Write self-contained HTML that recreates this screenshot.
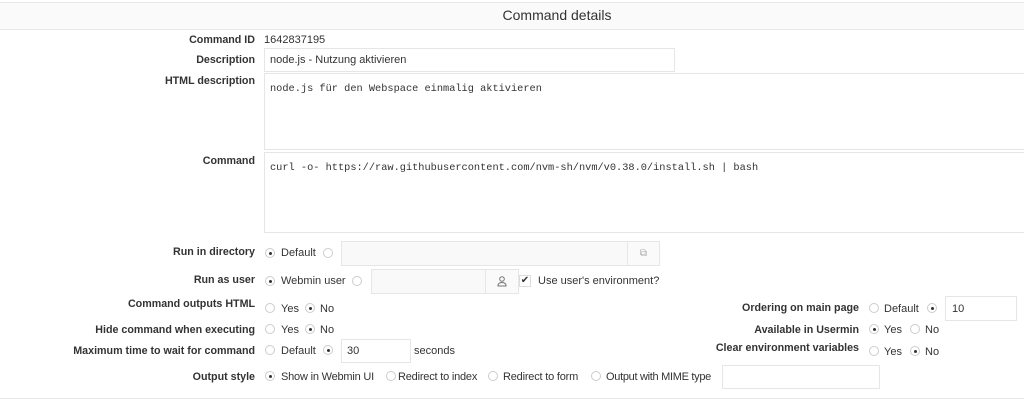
<!DOCTYPE html>
<html><head><meta charset="utf-8">
<style>
*{box-sizing:border-box;margin:0;padding:0}
body{width:1024px;height:402px;background:#fff;font-family:"Liberation Sans",sans-serif;font-size:11px;color:#333;position:relative;overflow:hidden}
.a{position:absolute;white-space:nowrap}
.l{position:absolute;font-weight:bold;text-align:right;color:#333;white-space:nowrap;font-size:10.7px}
.box{position:absolute;border:1px solid #e6e6e6;background:#fff}
.dis{background:#f9f9f9}
.r{position:absolute;width:10px;height:10px;border:1px solid #ccc;border-radius:50%;background:#fff}
.r.on::after{content:"";position:absolute;left:2.5px;top:2.5px;width:3px;height:3px;border-radius:50%;background:#333}
.mono{font-family:"Liberation Mono",monospace;font-size:10.3px}
</style></head><body>
<div class="a" style="left:0;top:2px;width:1024px;height:28px;background:#fafafa;border-top:1px solid #e8e8e8;border-bottom:1px solid #e8e8e8"></div>
<div class="a" style="left:0;top:7px;width:1114px;text-align:center;font-size:14px;color:#333">Command details</div>

<div class="l" style="right:769px;top:34px">Command ID</div>
<div class="a" style="left:264px;top:34px">1642837195</div>

<div class="l" style="right:769px;top:54px">Description</div>
<div class="box" style="left:264px;top:48px;width:411px;height:24px"></div>
<div class="a" style="left:270px;top:54px">node.js - Nutzung aktivieren</div>

<div class="l" style="right:769px;top:75px">HTML description</div>
<div class="box" style="left:264px;top:73px;width:770px;height:77px"></div>
<div class="a mono" style="left:270px;top:83px">node.js für den Webspace einmalig aktivieren</div>

<div class="l" style="right:769px;top:155px">Command</div>
<div class="box" style="left:264px;top:152px;width:770px;height:81px"></div>
<div class="a mono" style="left:270px;top:162px">curl -o- https://raw.githubusercontent.com/nvm-sh/nvm/v0.38.0/install.sh | bash</div>

<div class="l" style="right:769px;top:246px">Run in directory</div>
<div class="r on" style="left:265px;top:248px"></div>
<div class="a" style="left:281px;top:247px">Default</div>
<div class="r" style="left:323px;top:248px"></div>
<div class="box dis" style="left:341px;top:241px;width:287px;height:25px"></div>
<div class="box" style="left:627px;top:241px;width:33px;height:25px;background:#fafafa;color:#aaa;font-size:10px;text-align:center;line-height:23px">⧉</div>

<div class="l" style="right:769px;top:274px">Run as user</div>
<div class="r on" style="left:265px;top:276px"></div>
<div class="a" style="left:281px;top:275px">Webmin user</div>
<div class="r" style="left:352px;top:276px"></div>
<div class="box dis" style="left:371px;top:269px;width:115px;height:25px"></div>
<div class="box" style="left:485px;top:269px;width:34px;height:25px;background:#fafafa"></div>
<svg class="a" style="left:496px;top:275px" width="12" height="12" viewBox="0 0 12 12"><circle cx="6" cy="4" r="2.3" fill="none" stroke="#777" stroke-width="1"/><path d="M2 11 Q2 7.5 6 7.5 Q10 7.5 10 11 Z" fill="none" stroke="#777" stroke-width="1"/></svg>
<div class="a" style="left:519px;top:275px;width:12px;height:12px;border:1px solid #ddd;font-size:10px;line-height:10px;text-align:center;color:#333">✔</div>
<div class="a" style="left:538px;top:275px">Use user's environment?</div>

<div class="l" style="right:769px;top:298px">Command outputs HTML</div>
<div class="r" style="left:265px;top:303px"></div>
<div class="a" style="left:281px;top:303px">Yes</div>
<div class="r on" style="left:305px;top:303px"></div>
<div class="a" style="left:320px;top:303px">No</div>

<div class="l" style="right:769px;top:324px">Hide command when executing</div>
<div class="r" style="left:265px;top:324px"></div>
<div class="a" style="left:281px;top:324px">Yes</div>
<div class="r on" style="left:305px;top:324px"></div>
<div class="a" style="left:320px;top:324px">No</div>

<div class="l" style="right:769px;top:345px">Maximum time to wait for command</div>
<div class="r" style="left:265px;top:345px"></div>
<div class="a" style="left:281px;top:345px">Default</div>
<div class="r on" style="left:323px;top:345px"></div>
<div class="box" style="left:341px;top:339px;width:70px;height:24px"></div>
<div class="a" style="left:347px;top:345px">30</div>
<div class="a" style="left:414px;top:345px">seconds</div>

<div class="l" style="right:769px;top:371px">Output style</div>
<div class="r on" style="left:265px;top:371px"></div>
<div class="a" style="left:281px;top:371px;letter-spacing:-0.2px">Show in Webmin UI</div>
<div class="r" style="left:386px;top:371px"></div>
<div class="a" style="left:398px;top:371px;letter-spacing:-0.2px">Redirect to index</div>
<div class="r" style="left:488px;top:371px"></div>
<div class="a" style="left:503px;top:371px;letter-spacing:-0.2px">Redirect to form</div>
<div class="r" style="left:591px;top:371px"></div>
<div class="a" style="left:606px;top:371px;letter-spacing:-0.3px">Output with MIME type</div>
<div class="box" style="left:722px;top:365px;width:158px;height:24px"></div>

<div class="l" style="right:165px;top:302px">Ordering on main page</div>
<div class="r" style="left:869px;top:303px"></div>
<div class="a" style="left:884px;top:303px">Default</div>
<div class="r on" style="left:927px;top:303px"></div>
<div class="box" style="left:945px;top:296px;width:72px;height:25px"></div>
<div class="a" style="left:952px;top:303px">10</div>

<div class="l" style="right:165px;top:324px">Available in Usermin</div>
<div class="r on" style="left:869px;top:324px"></div>
<div class="a" style="left:884px;top:324px">Yes</div>
<div class="r" style="left:910px;top:324px"></div>
<div class="a" style="left:925px;top:324px">No</div>

<div class="l" style="right:165px;top:342px">Clear environment variables</div>
<div class="r" style="left:869px;top:346px"></div>
<div class="a" style="left:884px;top:346px">Yes</div>
<div class="r on" style="left:910px;top:346px"></div>
<div class="a" style="left:925px;top:346px">No</div>

<div class="a" style="left:0;top:398px;width:1024px;height:1px;background:#e8e8e8"></div>
</body></html>
